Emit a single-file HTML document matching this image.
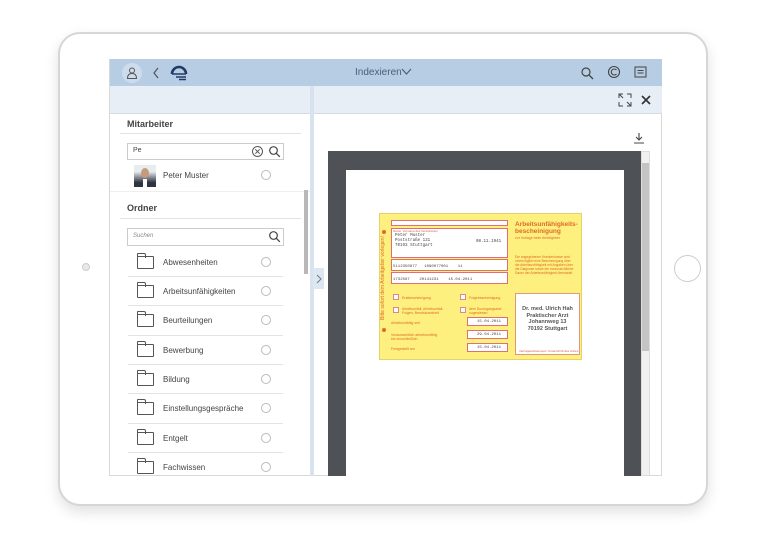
<!DOCTYPE html><html><head><meta charset="utf-8"><style>
*{margin:0;padding:0;box-sizing:border-box}
body{width:768px;height:538px;background:#fff;position:relative;overflow:hidden;font-family:"Liberation Sans",sans-serif;color:#444}
.a{position:absolute}
.dev{left:58px;top:32px;width:650px;height:474px;border:2px solid #d6d6d6;border-radius:22px;background:#fff;box-shadow:0 6px 14px rgba(0,0,0,.12)}
.t{font-size:8px;color:#444;white-space:nowrap}
.sep{height:1px;background:#e3e3e3}
.rad{width:10px;height:10px;border:1px solid #bbb;border-radius:50%}
.fold{width:17px;height:13px;border:1.3px solid #555;border-radius:1px}
.fold:before{content:"";position:absolute;left:-1px;top:-4px;width:7px;height:4px;border:1.3px solid #555;border-bottom:none;border-radius:1px 2px 0 0}
.r{color:#d9534f;font-size:3px;white-space:nowrap}
.rb{border:0.7px solid #e07070;background:#fff}
.cb{width:6px;height:6px;border:0.8px solid #d88;background:#fff}
.o{color:#e06a2a;font-size:3.5px;white-space:nowrap}
</style></head><body>
<div class="a dev"></div>
<div class="a" style="left:82px;top:263px;width:8px;height:8px;border-radius:50%;background:#e8e8e8;border:1px solid #ccc"></div>
<div class="a" style="left:674px;top:255px;width:27px;height:27px;border-radius:50%;border:1.5px solid #ccc"></div>
<!-- screen -->
<div class="a" style="left:109px;top:59px;width:553px;height:417px;background:#fff;border:1px solid #d8d8d8"></div>
<div class="a" style="left:110px;top:59px;width:552px;height:27px;background:#b6cde4"></div>
<div class="a" style="left:122px;top:63px;width:20px;height:20px;border-radius:50%;background:#cddcec"></div>
<svg class="a" style="left:122px;top:63px" width="20" height="20"><circle cx="10" cy="7.5" r="2.5" fill="none" stroke="#555" stroke-width="1"/><path d="M5.5 15.5 q0-5 4.5-5 q4.5 0 4.5 5z" fill="none" stroke="#555" stroke-width="1"/></svg>
<svg class="a" style="left:151px;top:66px" width="10" height="14"><path d="M7 2 L3 7 L7 12" fill="none" stroke="#555" stroke-width="1.2"/></svg>
<svg class="a" style="left:169px;top:62px" width="20" height="20"><path d="M3 12 A7 7 0 1 1 17 12" fill="none" stroke="#223a66" stroke-width="2.6"/><path d="M3 12h14M7 15h10M10 17.5h7" stroke="#223a66" stroke-width="1.5"/></svg>
<div class="a" style="left:355px;top:67px;font-size:10px;color:#4a5e7a">Indexieren</div>
<svg class="a" style="left:401px;top:68px" width="11" height="8"><path d="M1 1 L5.5 6 L10 1" fill="none" stroke="#4a5e7a" stroke-width="1.2"/></svg>
<svg class="a" style="left:580px;top:66px" width="14" height="14"><circle cx="6" cy="6" r="4" fill="none" stroke="#444" stroke-width="1.2"/><path d="M9 9l4 4" stroke="#444" stroke-width="1.3"/></svg>
<svg class="a" style="left:607px;top:65px" width="14" height="14"><circle cx="7" cy="7" r="5.5" fill="none" stroke="#444" stroke-width="1.1"/><path d="M9.5 5 A3 3 0 1 0 9.5 9" fill="none" stroke="#444" stroke-width="1.1"/></svg>
<svg class="a" style="left:634px;top:66px" width="14" height="13"><rect x="1" y="1" width="11" height="10" fill="none" stroke="#444" stroke-width="1"/><path d="M3.5 4.5h6M3.5 7h6" stroke="#444"/></svg>
<div class="a" style="left:110px;top:86px;width:552px;height:28px;background:#e7eef6;border-bottom:1px solid #d3dce6"></div>
<svg class="a" style="left:618px;top:93px" width="14" height="14"><path d="M1 5V1h4M9 1h4v4M13 9v4H9M5 13H1V9M1 1l4 4M13 13l-4-4" fill="none" stroke="#444" stroke-width="1"/></svg>
<svg class="a" style="left:641px;top:95px" width="10" height="10"><path d="M1 1l8 8M9 1L1 9" stroke="#333" stroke-width="1.6"/></svg>
<!-- divider -->
<div class="a" style="left:310px;top:86px;width:4px;height:390px;background:#d8e3ef"></div>
<div class="a" style="left:313px;top:268px;width:11px;height:21px;background:#dde7f2"></div>
<svg class="a" style="left:314px;top:274px" width="9" height="10"><path d="M3 1l4 4-4 4" fill="none" stroke="#6a7a90" stroke-width="1"/></svg>
<!-- left panel -->
<div class="a t" style="left:127px;top:119px;font-size:9px;font-weight:bold;color:#444">Mitarbeiter</div>
<div class="a sep" style="left:120px;top:133px;width:181px"></div>
<div class="a" style="left:127px;top:143px;width:157px;height:17px;border:1px solid #ccc"></div>
<div class="a t" style="left:133px;top:147px;font-size:7px">Pe</div>
<svg class="a" style="left:251px;top:145px" width="13" height="13"><circle cx="6.5" cy="6.5" r="5" fill="none" stroke="#555"/><path d="M4.3 4.3l4.4 4.4M8.7 4.3l-4.4 4.4" stroke="#555"/></svg>
<svg class="a" style="left:268px;top:145px" width="13" height="13"><circle cx="5.5" cy="5.5" r="3.8" fill="none" stroke="#444" stroke-width="1.2"/><path d="M8.3 8.3l3.5 3.5" stroke="#444" stroke-width="1.3"/></svg>
<div class="a" style="left:134px;top:165px;width:22px;height:22px;background:linear-gradient(#e9ecef 0 30%,#2e3440 80%)"><div class="a" style="left:7px;top:3px;width:8px;height:10px;border-radius:50%;background:#c79a7c"></div><div class="a" style="left:9px;top:14px;width:4px;height:8px;background:#fff"></div></div>
<div class="a t" style="left:163px;top:171px">Peter Muster</div>
<div class="a rad" style="left:261px;top:170px"></div>
<div class="a" style="left:110px;top:191px;width:200px;height:1px;background:#eee"></div>
<div class="a" style="left:304px;top:190px;width:4px;height:84px;background:#b8b8b8"></div>
<div class="a t" style="left:127px;top:203px;font-size:9px;font-weight:bold">Ordner</div>
<div class="a sep" style="left:120px;top:218px;width:181px"></div>
<div class="a" style="left:127px;top:228px;width:157px;height:18px;border:1px solid #ccc"></div>
<div class="a t" style="left:133px;top:233px;font-size:6px;color:#888;font-style:italic">Suchen</div>
<svg class="a" style="left:268px;top:230px" width="13" height="13"><circle cx="5.5" cy="5.5" r="3.8" fill="none" stroke="#444" stroke-width="1.2"/><path d="M8.3 8.3l3.5 3.5" stroke="#444" stroke-width="1.3"/></svg>
<div class="a fold" style="left:137px;top:256px"></div><div class="a t" style="left:163px;top:258px">Abwesenheiten</div><div class="a rad" style="left:261px;top:257px"></div><div class="a sep" style="left:128px;top:276px;width:155px"></div>
<div class="a fold" style="left:137px;top:285px"></div><div class="a t" style="left:163px;top:287px">Arbeitsunfähigkeiten</div><div class="a rad" style="left:261px;top:286px"></div><div class="a sep" style="left:128px;top:305px;width:155px"></div>
<div class="a fold" style="left:137px;top:314px"></div><div class="a t" style="left:163px;top:316px">Beurteilungen</div><div class="a rad" style="left:261px;top:315px"></div><div class="a sep" style="left:128px;top:335px;width:155px"></div>
<div class="a fold" style="left:137px;top:344px"></div><div class="a t" style="left:163px;top:346px">Bewerbung</div><div class="a rad" style="left:261px;top:345px"></div><div class="a sep" style="left:128px;top:364px;width:155px"></div>
<div class="a fold" style="left:137px;top:373px"></div><div class="a t" style="left:163px;top:375px">Bildung</div><div class="a rad" style="left:261px;top:374px"></div><div class="a sep" style="left:128px;top:393px;width:155px"></div>
<div class="a fold" style="left:137px;top:402px"></div><div class="a t" style="left:163px;top:404px">Einstellungsgespräche</div><div class="a rad" style="left:261px;top:403px"></div><div class="a sep" style="left:128px;top:423px;width:155px"></div>
<div class="a fold" style="left:137px;top:432px"></div><div class="a t" style="left:163px;top:434px">Entgelt</div><div class="a rad" style="left:261px;top:433px"></div><div class="a sep" style="left:128px;top:452px;width:155px"></div>
<div class="a fold" style="left:137px;top:461px"></div><div class="a t" style="left:163px;top:463px">Fachwissen</div><div class="a rad" style="left:261px;top:462px"></div>
<!-- right viewer -->
<svg class="a" style="left:633px;top:132px" width="12" height="12"><path d="M6 1v7M3 5l3 3 3-3M1 11h10" fill="none" stroke="#444" stroke-width="1.1"/></svg>
<div class="a" style="left:328px;top:151px;width:313px;height:325px;background:#4e5155"></div>
<div class="a" style="left:641px;top:151px;width:9px;height:325px;background:#f0f0f0;border:1px solid #ddd"></div>
<div class="a" style="left:642px;top:163px;width:7px;height:188px;background:#c4c4c4"></div>
<div class="a" style="left:346px;top:170px;width:278px;height:306px;background:#fff"></div>
<!-- form -->
<div class="a" style="left:379px;top:213px;width:203px;height:147px;background:#fdf07e;border:1px solid #e6d26a"></div>
<div class="a rb" style="left:391px;top:220px;width:117px;height:6px"></div>
<div class="a rb" style="left:391px;top:228px;width:117px;height:30px"></div>
<div class="a r" style="left:393px;top:229px">Name, Vorname des Versicherten</div>
<div class="a" style="left:395px;top:234px;font:4.2px 'Liberation Mono',monospace;color:#444;line-height:5px">Peter Muster<br>Poststraße 131<br>70193 Stuttgart</div>
<div class="a" style="left:476px;top:240px;font:4.2px 'Liberation Mono',monospace;color:#444">08.11.1941</div>
<div class="a rb" style="left:391px;top:259px;width:117px;height:12px"></div>
<div class="a" style="left:393px;top:265px;font:4px 'Liberation Mono',monospace;color:#444">5112350877 &nbsp; 1090077001 &nbsp;&nbsp; 11</div>
<div class="a rb" style="left:391px;top:272px;width:117px;height:12px"></div>
<div class="a" style="left:393px;top:278px;font:4px 'Liberation Mono',monospace;color:#444">1732587 &nbsp;&nbsp; 20141231 &nbsp;&nbsp; 15.04.2011</div>
<div class="a" style="left:382px;top:230px;width:4px;height:4px;border-radius:50%;background:#e06a2a"></div>
<div class="a" style="left:382px;top:328px;width:4px;height:4px;border-radius:50%;background:#e06a2a"></div>
<div class="a" style="left:380px;transform:rotate(-90deg);transform-origin:left top;font-size:5px;color:#e06a2a;white-space:nowrap;top:320px">Bitte sofort dem Arbeitgeber vorlegen!</div>
<div class="a" style="left:515px;top:221px;font-size:6.5px;font-weight:bold;color:#e06a2a;line-height:7px">Arbeitsunfähigkeits-<br>bescheinigung</div>
<div class="a o" style="left:515px;top:236px">zur Vorlage beim Arbeitgeber</div>
<div class="a" style="left:515px;top:255px;width:60px;font-size:3.3px;color:#e06a2a;line-height:4px">Die angegebenen Krankenkasse wird unverzüglich eine Bescheinigung über die Arbeitsunfähigkeit mit Angaben über die Diagnose sowie die voraussichtliche Dauer der Arbeitsunfähigkeit übersandt.</div>
<div class="a cb" style="left:393px;top:294px"></div><div class="a o" style="left:402px;top:296px">Erstbescheinigung</div>
<div class="a cb" style="left:460px;top:294px"></div><div class="a o" style="left:469px;top:296px">Folgebescheinigung</div>
<div class="a cb" style="left:393px;top:307px"></div><div class="a o" style="left:402px;top:307px;line-height:4px">Arbeitsunfall, Arbeitsunfall-<br>Folgen, Berufskrankheit</div>
<div class="a cb" style="left:460px;top:307px"></div><div class="a o" style="left:469px;top:307px;line-height:4px">dem Durchgangsarzt<br>zugewiesen</div>
<div class="a o" style="left:391px;top:321px">Arbeitsunfähig seit</div>
<div class="a o" style="left:391px;top:333px;line-height:4px">Voraussichtlich arbeitsunfähig<br>bis einschließlich</div>
<div class="a o" style="left:391px;top:347px">Festgestellt am</div>
<div class="a rb" style="left:467px;top:317px;width:41px;height:9px;font:4px 'Liberation Mono',monospace;color:#444;padding:2px 0 0 9px">15.04.2011</div>
<div class="a rb" style="left:467px;top:330px;width:41px;height:9px;font:4px 'Liberation Mono',monospace;color:#444;padding:2px 0 0 9px">29.04.2011</div>
<div class="a rb" style="left:467px;top:343px;width:41px;height:9px;font:4px 'Liberation Mono',monospace;color:#444;padding:2px 0 0 9px">15.04.2011</div>
<div class="a" style="left:515px;top:293px;width:65px;height:62px;background:#fff;border:0.8px solid #e09a7a"></div>
<div class="a" style="left:515px;top:306px;width:65px;text-align:center;font-size:5.5px;font-weight:bold;color:#555;line-height:6.5px">Dr. med. Ulrich Hah<br>Praktischer Arzt<br>Johannweg 13<br>70192 Stuttgart</div>
<div class="a r" style="left:519px;top:349px">Vertragsarztstempel / Unterschrift des Arztes</div>
</body></html>
